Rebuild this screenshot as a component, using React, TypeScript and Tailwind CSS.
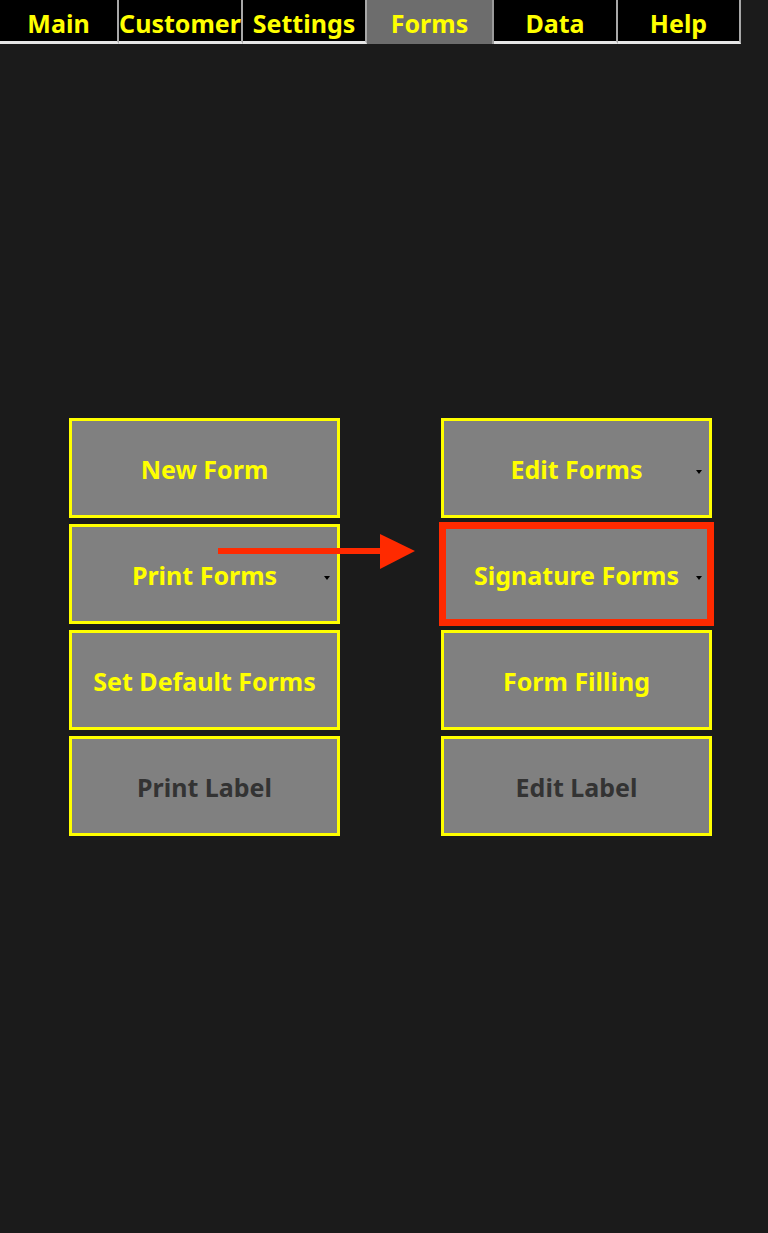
import React from 'react';

type Tab = { label: string; width: string; active?: boolean };

const tabs: Tab[] = [
  { label: 'Main', width: 'w-[119px]' },
  { label: 'Customer', width: 'w-[124px]' },
  { label: 'Settings', width: 'w-[124px]' },
  { label: 'Forms', width: 'w-[127px]', active: true },
  { label: 'Data', width: 'w-[124px]' },
  { label: 'Help', width: 'w-[123px]' },
];

type Btn = { label: string; dropdown?: boolean; disabled?: boolean; highlight?: boolean };

const left: Btn[] = [
  { label: 'New Form' },
  { label: 'Print Forms', dropdown: true },
  { label: 'Set Default Forms' },
  { label: 'Print Label', disabled: true },
];

const right: Btn[] = [
  { label: 'Edit Forms', dropdown: true },
  { label: 'Signature Forms', dropdown: true, highlight: true },
  { label: 'Form Filling' },
  { label: 'Edit Label', disabled: true },
];

const FormButton: React.FC<{ btn: Btn }> = ({ btn }) => (
  <div className="relative">
    <button
      className={`relative flex h-[100px] w-[271px] items-center justify-center border-[3px] border-[#ffff00] bg-[#808080] pt-1 text-[25px] font-bold ${
        btn.disabled ? 'text-[#333333]' : 'text-[#ffff00]'
      }`}
    >
      {btn.label}
      {btn.dropdown && (
        <span className="absolute right-[7px] top-[49px] h-0 w-0 border-x-[3px] border-t-[4px] border-x-transparent border-t-black" />
      )}
    </button>
    {/* red highlight box drawn over the button */}
    {btn.highlight && (
      <div className="pointer-events-none absolute -inset-[2px] border-[7px] border-[#ff2a00]" />
    )}
  </div>
);

const App: React.FC = () => {
  return (
    <div
      className="min-h-[1233px] w-[768px] bg-[#1b1b1b]"
      style={{ fontFamily: '"Noto Sans", "Open Sans", sans-serif' }}
    >
      {/* tab bar */}
      <div className="flex w-[741px]">
        {tabs.map((t) =>
          t.active ? (
            <div
              key={t.label}
              className={`${t.width} flex h-[44px] items-center justify-center border-r-2 border-[#9a9a9a] bg-[#6d6d6d] pt-[3px] text-[25px] font-bold text-[#ffff00]`}
            >
              {t.label}
            </div>
          ) : (
            <div
              key={t.label}
              className={`${t.width} flex h-[44px] items-center justify-center border-r-2 border-b-[3px] border-r-[#a8a8a8] border-b-[#e6e6e6] bg-black pt-[6px] text-[25px] font-bold text-[#ffff00]`}
            >
              {t.label}
            </div>
          )
        )}
      </div>

      {/* forms buttons */}
      <div className="relative ml-[69px] mt-[374px] grid w-fit grid-cols-[271px_271px] gap-x-[101px] gap-y-[6px]">
        {left.map((b, i) => (
          <React.Fragment key={b.label}>
            <FormButton btn={b} />
            <FormButton btn={right[i]} />
          </React.Fragment>
        ))}

        {/* annotation arrow */}
        <svg
          className="pointer-events-none absolute left-[149px] top-[115px]"
          width="200"
          height="38"
          viewBox="0 0 200 38"
        >
          <rect x="0" y="15" width="164" height="6" fill="#ff2a00" />
          <polygon points="162,1 197,18 162,36" fill="#ff2a00" />
        </svg>
      </div>
    </div>
  );
};

export default App;
